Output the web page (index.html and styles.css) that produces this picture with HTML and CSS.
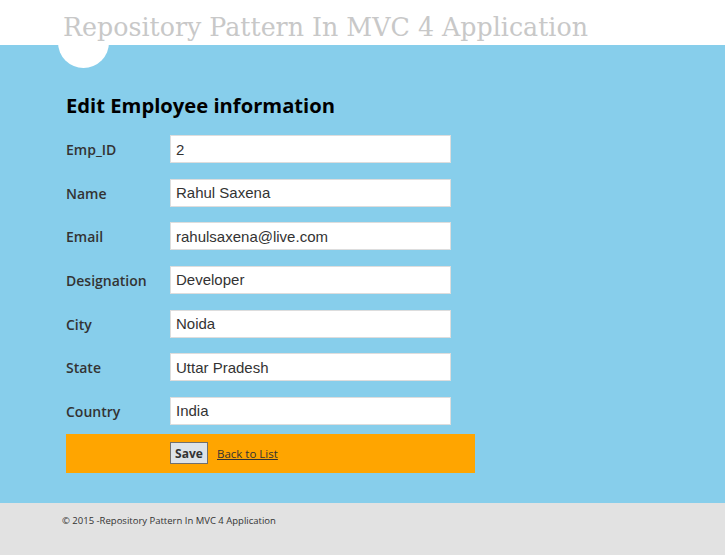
FILE: index.html
```html
<!DOCTYPE html>
<html>
<head>
<meta charset="utf-8">
<title>Edit Employee</title>
<link rel="stylesheet" href="styles.css">
</head>
<body>
<header class="site-header">
  <p class="site-title">Repository Pattern In MVC 4 Application</p>
  <span class="logo-circle"></span>
</header>
<main class="content">
  <h2 class="page-title">Edit Employee information</h2>
  <form class="edit-form">
    <div class="field"><label class="field-label">Emp_ID</label><input class="field-input" type="text" value="2"></div>
    <div class="field"><label class="field-label">Name</label><input class="field-input" type="text" value="Rahul Saxena"></div>
    <div class="field"><label class="field-label">Email</label><input class="field-input" type="text" value="rahulsaxena@live.com"></div>
    <div class="field"><label class="field-label">Designation</label><input class="field-input" type="text" value="Developer"></div>
    <div class="field"><label class="field-label">City</label><input class="field-input" type="text" value="Noida"></div>
    <div class="field"><label class="field-label">State</label><input class="field-input" type="text" value="Uttar Pradesh"></div>
    <div class="field"><label class="field-label">Country</label><input class="field-input" type="text" value="India"></div>
    <div class="actions">
      <button class="save-btn" type="button">Save</button>
      <a class="back-link" href="#">Back to List</a>
    </div>
  </form>
</main>
<footer class="site-footer">
  <p class="footer-text">© 2015 -Repository Pattern In MVC 4 Application</p>
</footer>
</body>
</html>
```
FILE: styles.css
```css
html, body {
  margin: 0;
  padding: 0;
}
body {
  font-family: "Open Sans", "Noto Sans", sans-serif;
  color: #333;
  background: #e2e2e2;
  width: 725px;
  height: 555px;
  overflow: hidden;
}
.site-header {
  position: relative;
  height: 45px;
  background: #fff;
}
.site-title {
  margin: 0;
  padding-left: 63px;
  padding-top: 13px;
  font-family: "DejaVu Serif", serif;
  font-size: 25.3px;
  line-height: 30px;
  color: #c8c8c8;
  white-space: nowrap;
  position: relative;
  z-index: 2;
}
.logo-circle {
  position: absolute;
  left: 58px;
  top: 17px;
  width: 51px;
  height: 51px;
  border-radius: 50%;
  background: #fff;
  z-index: 1;
}
.content {
  background: #87ceeb;
  height: 458px;
  padding: 0 0 0 66px;
  box-sizing: border-box;
  overflow: hidden;
}
.page-title {
  margin: 0;
  padding-top: 47px;
  font-size: 20.2px;
  line-height: 26px;
  font-weight: 700;
  color: #000;
}
.edit-form {
  margin-top: 17px;
  display: flex;
  flex-direction: column;
  gap: 15.67px;
  width: 409px;
}
.field {
  display: flex;
  align-items: center;
  height: 28px;
}
.field-label {
  width: 104px;
  font-size: 14px;
  font-weight: 600;
  color: #333;
  padding-top: 1px;
}
.field-input {
  box-sizing: border-box;
  width: 281px;
  height: 28px;
  margin: 0;
  border: 1px solid #ddd;
  background: #fff;
  padding: 0 5px;
  font-family: "Liberation Sans", Arial, sans-serif;
  font-size: 15px;
  color: #333;
  outline: none;
}
.actions {
  margin-top: -6.67px;
  height: 39px;
  background: #ffa500;
  display: flex;
  align-items: center;
  padding-left: 104px;
  gap: 9px;
}
.save-btn {
  box-sizing: border-box;
  width: 38px;
  height: 22px;
  margin: 0;
  padding: 0;
  border: 1px solid #707070;
  background: #dde3e8;
  font-family: "Open Sans", sans-serif;
  font-size: 12px;
  font-weight: 700;
  color: #333;
}
.back-link {
  font-size: 11.5px;
  color: #333;
  text-decoration: underline;
}
.site-footer {
  height: 52px;
  background: #e2e2e2;
}
.footer-text {
  margin: 0;
  padding: 11px 0 0 62px;
  font-size: 9.5px;
  color: #333;
}
```
